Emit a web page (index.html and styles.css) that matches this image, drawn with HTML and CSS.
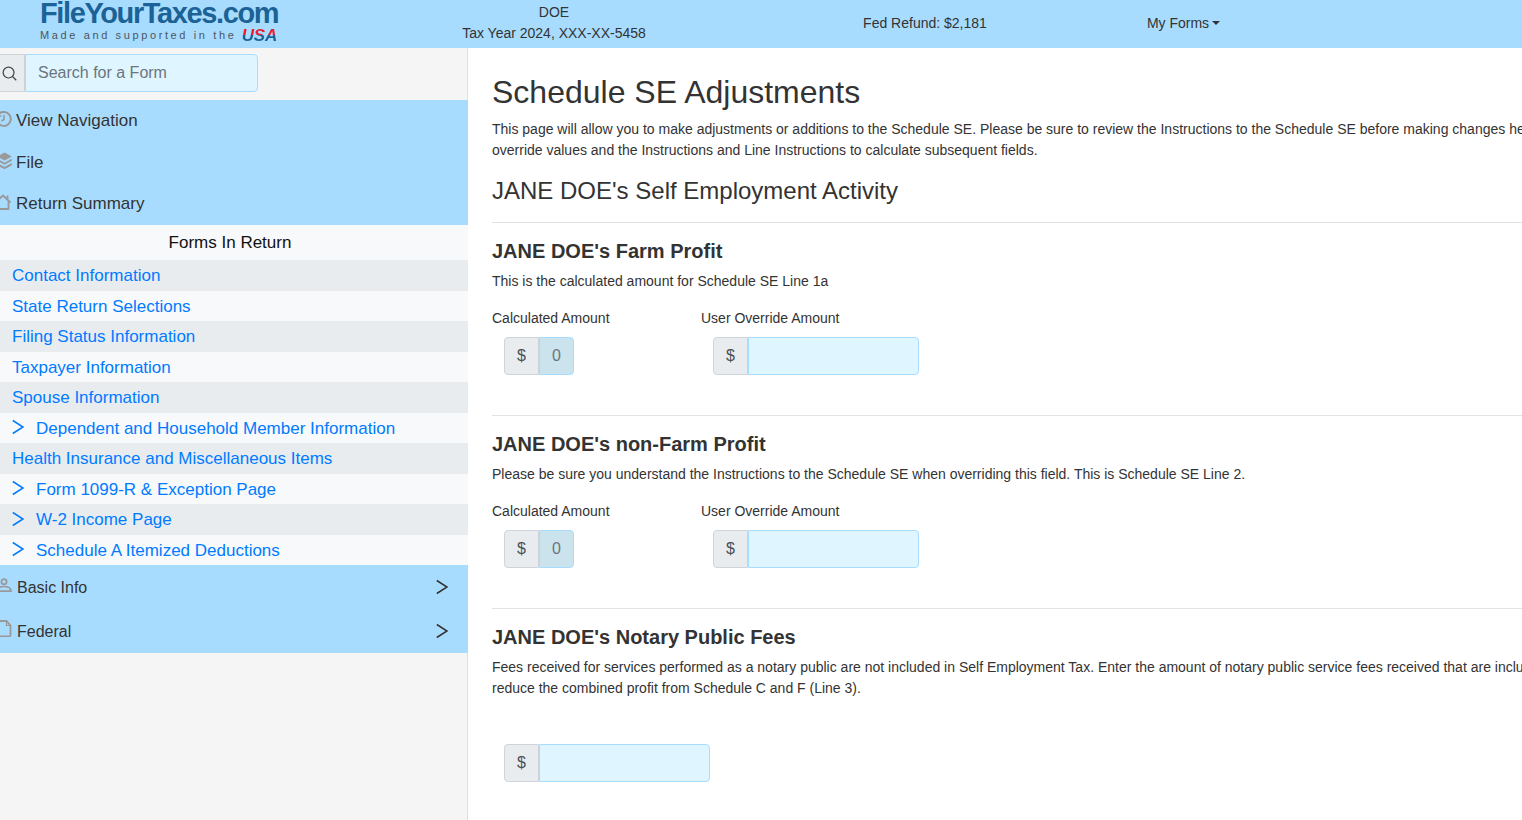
FILE: index.html
```html
<!DOCTYPE html>
<html lang="en">
<head>
<meta charset="utf-8">
<title>Schedule SE Adjustments</title>
<link rel="stylesheet" href="styles.css">
</head>
<body>
<header class="topbar">
  <div class="logo">
    <div class="logo-name">FileYourTaxes.com</div>
    <div class="logo-tag"><span>Made and supported in the</span><em class="usa">USA</em></div>
  </div>
  <div class="head-cell">DOE<br>Tax Year 2024, XXX-XX-5458</div>
  <div class="head-spacer"></div>
  <div class="head-cell">Fed Refund: $2,181</div>
  <div class="head-cell">My Forms<span class="caret"></span></div>
</header>
<div class="page">
  <aside class="sidebar">
    <div class="search">
      <span class="search-addon"><svg class="search-icon" viewBox="0 0 16 16" fill="none" stroke="currentColor" stroke-width="1.3"><circle cx="7" cy="7" r="5.8"/><path d="M11.2 11.2l4 4"/></svg></span>
      <span class="search-input">Search for a Form</span>
    </div>
    <nav class="mainnav">
      <a class="nav-row"><svg class="ico" viewBox="0 0 16 16" fill="none" stroke="currentColor" stroke-width="2"><path d="M2.800 3A7 7 0 1 1 1.500 11"/><path d="M8 4v4.500L5.500 10" stroke-width="1.500"/><path d="M1.500 1v4h4" stroke-width="1.500"/></svg><span>View Navigation</span></a>
      <a class="nav-row"><svg class="ico tall" viewBox="0 0 16 18" fill="currentColor"><path d="M8.500 0.500L15.800 4.500 8.500 8.500 1.200 4.500z"/><path d="M1.200 6.800l7.300 4 7.300-4v2l-7.300 4-7.300-4z"/><path d="M1.200 11l7.300 4 7.300-4v2.200l-7.300 4-7.300-4z"/></svg><span>File</span></a>
      <a class="nav-row"><svg class="ico roof" viewBox="0 0 16 16" fill="none" stroke="currentColor" stroke-width="1.800"><path d="M-0.500 8.500L7 1.500 14.500 8.500M2 7v8h10.500V7M11.500 1.500v4"/></svg><span>Return Summary</span></a>
    </nav>
    <div class="forms-title">Forms In Return</div>
    <ul class="forms">
      <li><a>Contact Information</a></li>
      <li><a>State Return Selections</a></li>
      <li><a>Filing Status Information</a></li>
      <li><a>Taxpayer Information</a></li>
      <li><a>Spouse Information</a></li>
      <li class="has-sub"><svg class="chev" viewBox="0 0 12 16" fill="none" stroke="currentColor" stroke-width="1.500"><path d="M0.800 1.500L11 8 .8 14.500"/></svg><a>Dependent and Household Member Information</a></li>
      <li><a>Health Insurance and Miscellaneous Items</a></li>
      <li class="has-sub"><svg class="chev" viewBox="0 0 12 16" fill="none" stroke="currentColor" stroke-width="1.500"><path d="M0.800 1.500L11 8 .8 14.500"/></svg><a>Form 1099-R &amp; Exception Page</a></li>
      <li class="has-sub"><svg class="chev" viewBox="0 0 12 16" fill="none" stroke="currentColor" stroke-width="1.500"><path d="M0.800 1.500L11 8 .8 14.500"/></svg><a>W-2 Income Page</a></li>
      <li class="has-sub"><svg class="chev" viewBox="0 0 12 16" fill="none" stroke="currentColor" stroke-width="1.500"><path d="M0.800 1.500L11 8 .8 14.500"/></svg><a>Schedule A Itemized Deductions</a></li>
    </ul>
    <nav class="subnav">
      <a class="sub-row"><svg class="ico-sm" viewBox="0 0 16 16" fill="none" stroke="currentColor" stroke-width="1.700"><circle cx="8" cy="3.800" r="2.600"/><path d="M1 13.200c0-3 3-4.700 7-4.700s7 1.700 7 4.700z"/></svg><span>Basic Info</span><svg class="chev-dark" viewBox="0 0 12 16" fill="none" stroke="currentColor" stroke-width="1.500"><path d="M0.800 1.500L11 8 .8 14.500"/></svg></a>
      <a class="sub-row"><svg class="ico-file" viewBox="0 0 14 17" fill="none" stroke="currentColor" stroke-width="1.800"><path d="M-3 1h11.500l4 4.500v9.500a1.500 1.500 0 0 1-1.500 1.500H-3z"/><path d="M8.500 1v4.500h4" stroke-width="1.200"/></svg><span>Federal</span><svg class="chev-dark" viewBox="0 0 12 16" fill="none" stroke="currentColor" stroke-width="1.500"><path d="M0.800 1.500L11 8 .8 14.500"/></svg></a>
    </nav>
  </aside>
  <main class="content">
    <h1>Schedule SE Adjustments</h1>
    <p>This page will allow you to make adjustments or additions to the Schedule SE. Please be sure to review the Instructions to the Schedule SE before making changes here. Use the<br>override values and the Instructions and Line Instructions to calculate subsequent fields.</p>
    <h2>JANE DOE's Self Employment Activity</h2>

    <section class="block">
      <h3>JANE DOE's Farm Profit</h3>
      <p class="note">This is the calculated amount for Schedule SE Line 1a</p>
      <div class="amounts">
        <div class="amount-col">
          <label>Calculated Amount</label>
          <div class="group"><span class="addon">$</span><span class="field calc">0</span></div>
        </div>
        <div class="amount-col">
          <label>User Override Amount</label>
          <div class="group"><span class="addon">$</span><span class="field wide"></span></div>
        </div>
      </div>
    </section>

    <section class="block">
      <h3>JANE DOE's non-Farm Profit</h3>
      <p class="note">Please be sure you understand the Instructions to the Schedule SE when overriding this field. This is Schedule SE Line 2.</p>
      <div class="amounts">
        <div class="amount-col">
          <label>Calculated Amount</label>
          <div class="group"><span class="addon">$</span><span class="field calc">0</span></div>
        </div>
        <div class="amount-col">
          <label>User Override Amount</label>
          <div class="group"><span class="addon">$</span><span class="field wide"></span></div>
        </div>
      </div>
    </section>

    <section class="block">
      <h3>JANE DOE's Notary Public Fees</h3>
      <p class="note">Fees received for services performed as a notary public are not included in Self Employment Tax. Enter the amount of notary public service fees received that are included above to<br>reduce the combined profit from Schedule C and F (Line 3).</p>
      <div class="group lone"><span class="addon">$</span><span class="field wide"></span></div>
    </section>
  </main>
</div>
</body>
</html>
```
FILE: styles.css
```css
* { box-sizing: border-box; }
html, body { height: 100%; }
body {
  margin: 0;
  overflow: hidden;
  font-family: "Liberation Sans", Arial, sans-serif;
  font-size: 14px;
  line-height: 21px;
  color: #333;
  background: #fff;
}

.topbar {
  height: 48px;
  background: #a8dcff;
  display: grid;
  grid-template-columns: 440px 228px 128px 258px 259px;
  align-items: center;
  text-align: center;
}
.head-cell { padding-bottom: 2px; }
.logo { padding-left: 40px; text-align: left; height: 48px; overflow: hidden; }
.logo-name {
  font-size: 29px;
  line-height: 27px;
  font-weight: 700;
  letter-spacing: -1.38px;
  color: #1b6296;
  white-space: nowrap;
}
.logo-tag {
  display: flex;
  align-items: center;
  width: 238px;
  justify-content: space-between;
  font-size: 11px;
  line-height: 16px;
  letter-spacing: 2.62px;
  color: #4c555c;
  white-space: nowrap;
}
.usa {
  font-size: 17px;
  line-height: 15px;
  font-weight: 700;
  letter-spacing: -0.2px;
  font-style: italic;
  padding-right: 1px;
  background: linear-gradient(#ed1c2e 0 44%, #1b6296 44%);
  -webkit-background-clip: text;
  background-clip: text;
  color: transparent;
}
.caret {
  display: inline-block;
  margin-left: 3px;
  vertical-align: 3px;
  border-top: 4px solid #333;
  border-left: 4px solid transparent;
  border-right: 4px solid transparent;
}

.page { display: flex; height: 772px; }

.sidebar {
  width: 468px;
  flex: none;
  background: #f5f5f5;
  box-shadow: inset -1px 0 #dfdfdf;
  overflow: hidden;
}
.search { height: 52px; display: flex; align-items: flex-start; padding-top: 6px; }
.search-addon {
  width: 25px;
  height: 38px;
  background: #e9ecef;
  border: 1px solid #ced4da;
  border-left: 0;
  display: flex;
  align-items: center;
  color: #444;
  padding-left: 2px;
}
.search-icon { width: 15px; height: 15px; }
.search-input {
  width: 233px;
  height: 38px;
  background: #dff5ff;
  border: 1px solid #a8dcff;
  border-radius: 0 4px 4px 0;
  padding: 0 12px;
  font-size: 16px;
  line-height: 36px;
  color: #6c757d;
}

.mainnav {
  height: 125px;
  background: #a8dcff;
  display: grid;
  grid-auto-rows: 41.5px;
}
.nav-row {
  display: flex;
  align-items: center;
  font-size: 17px;
  color: #333;
}
.ico {
  width: 16px;
  height: 16px;
  margin-left: -4px;
  margin-right: 4px;
  margin-top: -3px;
  color: #999;
  flex: none;
}
.ico.tall { height: 18px; margin-top: -2px; }
.ico-sm {
  width: 16px;
  height: 16px;
  margin-left: -4px;
  margin-right: 5px;
  margin-top: -2px;
  color: #999;
  flex: none;
}
.ico-file {
  width: 14px;
  height: 17px;
  margin-left: -2px;
  margin-right: 5px;
  margin-top: -5px;
  color: #999;
  flex: none;
}

.forms-title {
  height: 35.3px;
  background: #f8f9fa;
  padding-right: 8px;
  text-align: center;
  font-size: 17px;
  line-height: 36px;
  color: #111;
}
.forms { margin: 0; padding: 0; list-style: none; }
.forms li {
  height: 30.5px;
  padding: 0 12px;
  display: flex;
  align-items: center;
  font-size: 17px;
  color: #007bff;
  background: #f8f9fa;
}
.forms li:nth-child(odd) { background: #e9ecef; }
.forms a { color: #007bff; }
.chev { width: 12px; height: 16px; margin-right: 12px; margin-top: -2px; flex: none; }

.subnav { background: #a8dcff; margin-top: -0.3px; }
.sub-row {
  height: 44px;
  display: flex;
  align-items: center;
  font-size: 16px;
  color: #333;
}
.sub-row span { flex: 1; }
.chev-dark { width: 12px; height: 16px; margin-right: 20px; flex: none; color: #333; }

.content {
  flex: 1;
  min-width: 0;
  padding: 0 0 0 24px;
  overflow: hidden;
}
.content h1 {
  margin: 24px 0 7px;
  font-size: 32px;
  line-height: 40px;
  font-weight: 400;
  white-space: nowrap;
}
.content p { margin: 0; white-space: nowrap; }
.content h2 {
  margin: 15px 0 17px;
  font-size: 24px;
  line-height: 29px;
  font-weight: 400;
}
.block { border-top: 1px solid #e3e3e3; height: 193px; padding-top: 16px; }
.block h3 {
  margin: 0 0 8px;
  font-size: 20px;
  line-height: 24px;
  font-weight: 700;
}
.content .note { margin: 0; }
.amounts { display: flex; margin-top: 16px; }
.amount-col { flex: none; width: 209px; }
.amount-col + .amount-col { width: 260px; }
.amount-col label { display: block; margin-bottom: 8px; }
.group { display: flex; margin-left: 12px; height: 38px; }
.group.lone { margin-top: 45px; }
.addon {
  width: 35px;
  flex: none;
  background: #e9ecef;
  border: 1px solid #ced4da;
  border-radius: 4px 0 0 4px;
  text-align: center;
  font-size: 16px;
  line-height: 36px;
  color: #495057;
}
.field {
  flex: none;
  height: 38px;
  background: #dff5ff;
  border: 1px solid #a8dcff;
  border-radius: 0 4px 4px 0;
  font-size: 16px;
  line-height: 36px;
  text-align: center;
  color: #6c757d;
}
.field.calc { width: 35px; background: #cbe3ec; }
.field.wide { width: 171px; }
```
